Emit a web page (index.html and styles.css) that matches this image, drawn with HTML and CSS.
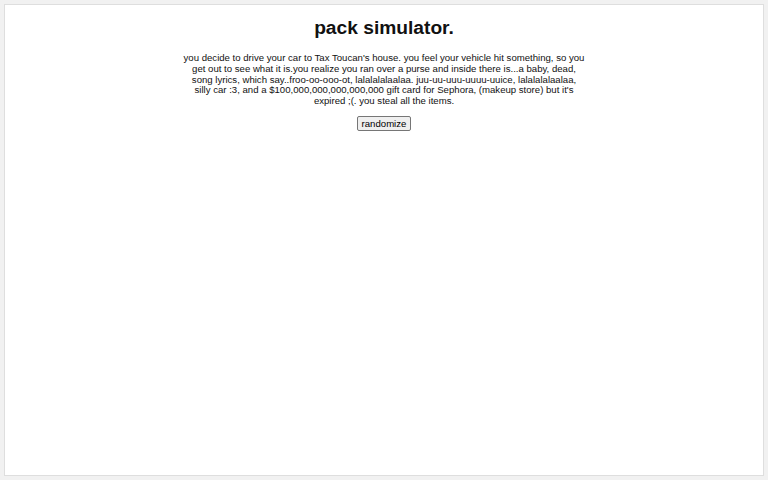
FILE: index.html
```html
<!DOCTYPE html>
<html>
<head>
<meta charset="utf-8">
<link rel="stylesheet" href="styles.css">
</head>
<body>
<main class="page">
  <h1 class="title">pack simulator.</h1>
  <p class="story">you decide to drive your car to Tax Toucan's house. you feel your vehicle hit something, so you get out to see what it is.you realize you ran over a purse and inside there is...a baby, dead, song lyrics, which say..froo-oo-ooo-ot, lalalalalaalaa. juu-uu-uuu-uuuu-uuice, lalalalalaalaa, silly car :3, and a $100,000,000,000,000,000 gift card for Sephora, (makeup store) but it's expired ;(. you steal all the items.</p>
  <button class="randomize" type="button">randomize</button>
</main>
</body>
</html>
```
FILE: styles.css
```css
html, body {
  margin: 0;
  padding: 0;
  background: #f1f1f1;
  font-family: "Liberation Sans", Arial, sans-serif;
}

.page {
  box-sizing: border-box;
  margin: 4px 4px 0 4px;
  height: 472px;
  background: #fff;
  border: 1px solid #dedede;
  display: flex;
  flex-direction: column;
  align-items: center;
  color: #111;
}

.title {
  margin: 12px 0 0;
  font-size: 19.2px;
  line-height: 22px;
  font-weight: bold;
}

.story {
  margin: 14px 0 0;
  width: 402px;
  font-size: 9.6px;
  line-height: 10.8px;
  text-align: center;
}

.randomize {
  margin-top: 9px;
  font-family: "Liberation Sans", Arial, sans-serif;
  font-size: 9.6px;
  padding: 1px 4px;
  background: #efefef;
  border: 1px solid #767676;
  border-radius: 2px;
  color: #000;
}
```
